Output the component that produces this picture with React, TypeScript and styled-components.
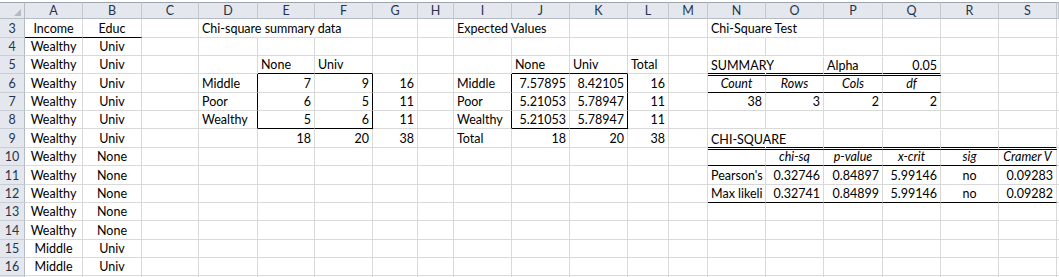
import * as React from 'react';
import styled, { createGlobalStyle, css } from 'styled-components';

type Align = 'l' | 'r' | 'c';
type Line = 'thin' | 'double' | 'none';

interface CellSpec {
  v: string;
  a?: Align;
  i?: boolean;
}

interface EdgeSpec {
  b?: Line;
  r?: Line;
}

// the last column only shows a sliver at the right edge, so it has no letter
const COLS: { k: string; w: number; label?: boolean }[] = [
  { k: 'A', w: 58 },
  { k: 'B', w: 59 },
  { k: 'C', w: 57 },
  { k: 'D', w: 59 },
  { k: 'E', w: 57 },
  { k: 'F', w: 58 },
  { k: 'G', w: 45 },
  { k: 'H', w: 36 },
  { k: 'I', w: 58 },
  { k: 'J', w: 58 },
  { k: 'K', w: 58 },
  { k: 'L', w: 41 },
  { k: 'M', w: 39 },
  { k: 'N', w: 58 },
  { k: 'O', w: 58 },
  { k: 'P', w: 59 },
  { k: 'Q', w: 58 },
  { k: 'R', w: 58 },
  { k: 'S', w: 58 },
  { k: 'T', w: 2, label: false },
];

const ROWS: { n: number; h: number; label?: boolean }[] = [
  { n: 3, h: 19 },
  { n: 4, h: 18 },
  { n: 5, h: 18 },
  { n: 6, h: 19 },
  { n: 7, h: 18 },
  { n: 8, h: 18 },
  { n: 9, h: 19 },
  { n: 10, h: 18 },
  { n: 11, h: 19 },
  { n: 12, h: 18 },
  { n: 13, h: 18 },
  { n: 14, h: 19 },
  { n: 15, h: 18 },
  { n: 16, h: 18 },
  { n: 17, h: 2, label: false },
];

const DATA: Record<string, CellSpec> = {
  A3: { v: 'Income', a: 'c' },
  B3: { v: 'Educ', a: 'c' },
  D3: { v: 'Chi-square summary data' },
  I3: { v: 'Expected Values' },
  N3: { v: 'Chi-Square Test' },

  E5: { v: 'None' },
  F5: { v: 'Univ' },
  J5: { v: 'None' },
  K5: { v: 'Univ' },
  L5: { v: 'Total' },
  N5: { v: 'SUMMARY' },
  P5: { v: 'Alpha' },
  Q5: { v: '0.05', a: 'r' },

  D6: { v: 'Middle' },
  E6: { v: '7', a: 'r' },
  F6: { v: '9', a: 'r' },
  G6: { v: '16', a: 'r' },
  I6: { v: 'Middle' },
  J6: { v: '7.57895', a: 'r' },
  K6: { v: '8.42105', a: 'r' },
  L6: { v: '16', a: 'r' },
  N6: { v: 'Count', a: 'c', i: true },
  O6: { v: 'Rows', a: 'c', i: true },
  P6: { v: 'Cols', a: 'c', i: true },
  Q6: { v: 'df', a: 'c', i: true },

  D7: { v: 'Poor' },
  E7: { v: '6', a: 'r' },
  F7: { v: '5', a: 'r' },
  G7: { v: '11', a: 'r' },
  I7: { v: 'Poor' },
  J7: { v: '5.21053', a: 'r' },
  K7: { v: '5.78947', a: 'r' },
  L7: { v: '11', a: 'r' },
  N7: { v: '38', a: 'r' },
  O7: { v: '3', a: 'r' },
  P7: { v: '2', a: 'r' },
  Q7: { v: '2', a: 'r' },

  D8: { v: 'Wealthy' },
  E8: { v: '5', a: 'r' },
  F8: { v: '6', a: 'r' },
  G8: { v: '11', a: 'r' },
  I8: { v: 'Wealthy' },
  J8: { v: '5.21053', a: 'r' },
  K8: { v: '5.78947', a: 'r' },
  L8: { v: '11', a: 'r' },

  E9: { v: '18', a: 'r' },
  F9: { v: '20', a: 'r' },
  G9: { v: '38', a: 'r' },
  I9: { v: 'Total' },
  J9: { v: '18', a: 'r' },
  K9: { v: '20', a: 'r' },
  L9: { v: '38', a: 'r' },
  N9: { v: 'CHI-SQUARE' },

  O10: { v: 'chi-sq', a: 'c', i: true },
  P10: { v: 'p-value', a: 'c', i: true },
  Q10: { v: 'x-crit', a: 'c', i: true },
  R10: { v: 'sig', a: 'c', i: true },
  S10: { v: 'Cramer V', a: 'c', i: true },

  N11: { v: "Pearson's" },
  O11: { v: '0.32746', a: 'r' },
  P11: { v: '0.84897', a: 'r' },
  Q11: { v: '5.99146', a: 'r' },
  R11: { v: 'no', a: 'c' },
  S11: { v: '0.09283', a: 'r' },

  N12: { v: 'Max likeli' },
  O12: { v: '0.32741', a: 'r' },
  P12: { v: '0.84899', a: 'r' },
  Q12: { v: '5.99146', a: 'r' },
  R12: { v: 'no', a: 'c' },
  S12: { v: '0.09282', a: 'r' },
};

// raw data in columns A and B
for (let n = 4; n <= 16; n++) {
  DATA['A' + n] = { v: n <= 14 ? 'Wealthy' : 'Middle', a: 'c' };
  DATA['B' + n] = { v: n >= 10 && n <= 14 ? 'None' : 'Univ', a: 'c' };
}

const EDGES: Record<string, EdgeSpec> = {};
const edge = (keys: string[], e: EdgeSpec) =>
  keys.forEach((k) => (EDGES[k] = { ...EDGES[k], ...e }));

edge(['A3', 'B3'], { b: 'thin' });
// observed box
edge(['E5', 'F5', 'E8', 'F8'], { b: 'thin' });
edge(['D6', 'D7', 'D8', 'F6', 'F7', 'F8'], { r: 'thin' });
// expected box
edge(['J5', 'K5', 'J8', 'K8'], { b: 'thin' });
edge(['I6', 'I7', 'I8', 'K6', 'K7', 'K8'], { r: 'thin' });
// test tables
edge(['N5', 'O5', 'P5', 'Q5'], { b: 'double' });
edge(['N6', 'O6', 'P6', 'Q6'], { b: 'thin' });
edge(['N9', 'O9', 'P9', 'Q9', 'R9', 'S9'], { b: 'double' });
edge(['N10', 'O10', 'P10', 'Q10', 'R10', 'S10'], { b: 'thin' });
edge(['N12', 'O12', 'P12', 'Q12', 'R12', 'S12'], { b: 'thin' });
// text spilling over the next cell hides the gridline
edge(['D3', 'E3', 'I3', 'N3', 'N5', 'N9'], { r: 'none' });

const GlobalStyle = createGlobalStyle`
  html, body {
    margin: 0;
    padding: 0;
    background: #fff;
    overflow: hidden;
  }
  body {
    font-family: Lato, "Liberation Sans", sans-serif;
  }
`;

const Sheet = styled.div<{ $cols: string; $rows: string }>`
  display: grid;
  grid-template-columns: ${(p) => p.$cols};
  grid-template-rows: ${(p) => p.$rows};
  width: max-content;
  padding-top: 2px;
  font-size: 12.5px;
  color: #000;
`;

const headerBg = '#e4e8ee';

const Corner = styled.div`
  position: relative;
  background: ${headerBg};
  border-top: 1px solid #9ca4ae;
  border-right: 1px solid #b6bcc5;
  border-bottom: 1px solid #b6bcc5;

  &::after {
    content: '';
    position: absolute;
    right: 3px;
    bottom: 2px;
    width: 0;
    height: 0;
    border-left: 7px solid transparent;
    border-bottom: 7px solid #b4bac2;
  }
`;

const ColHeader = styled.div`
  display: flex;
  align-items: center;
  justify-content: center;
  overflow: hidden;
  background: ${headerBg};
  border-top: 1px solid #9ca4ae;
  border-right: 1px solid #c3c8cf;
  border-bottom: 1px solid #b6bcc5;
  color: #26344a;
  font-size: 12.5px;
  line-height: 14px;
`;

const RowHeader = styled.div`
  display: flex;
  align-items: flex-end;
  justify-content: center;
  overflow: hidden;
  padding-bottom: 1px;
  background: ${headerBg};
  border-right: 1px solid #b6bcc5;
  border-bottom: 1px solid #c9ced6;
  color: #26344a;
  font-size: 12.5px;
  line-height: 14px;
`;

const lineCss = (l: Line | undefined) => {
  if (l === 'thin') return '1px solid #000';
  if (l === 'double') return '3px double #000';
  if (l === 'none') return '1px solid transparent';
  return '1px solid #d9d9d9';
};

const Cell = styled.div<{ $align: Align; $italic: boolean; $b?: Line; $r?: Line }>`
  display: flex;
  align-items: flex-end;
  justify-content: ${(p) =>
    p.$align === 'r' ? 'flex-end' : p.$align === 'c' ? 'center' : 'flex-start'};
  padding: 0 3px ${(p) => (p.$b === 'double' ? 0 : 1)}px 3px;
  border-right: ${(p) => lineCss(p.$r)};
  border-bottom: ${(p) => lineCss(p.$b)};
  ${(p) =>
    p.$b === 'double' &&
    css`
      margin-bottom: -1px;
      position: relative;
      top: 1px;
    `}
  min-width: 0;
  white-space: nowrap;
  line-height: 14px;
  font-style: ${(p) => (p.$italic ? 'italic' : 'normal')};
  overflow: visible;
`;

export default function App() {
  const colsTemplate = ['25px', ...COLS.map((c) => c.w + 'px')].join(' ');
  const rowsTemplate = ['17px', ...ROWS.map((r) => r.h + 'px')].join(' ');

  return (
    <>
      <GlobalStyle />
      <Sheet $cols={colsTemplate} $rows={rowsTemplate}>
        <Corner />
        {COLS.map((c) => (
          <ColHeader key={c.k}>{c.label === false ? null : c.k}</ColHeader>
        ))}
        {ROWS.map((r) => (
          <React.Fragment key={r.n}>
            <RowHeader>{r.label === false ? null : r.n}</RowHeader>
            {COLS.map((c) => {
              const id = c.k + r.n;
              const d = DATA[id];
              const e = EDGES[id] || {};
              return (
                <Cell
                  key={id}
                  $align={d?.a || 'l'}
                  $italic={!!d?.i}
                  $b={e.b}
                  $r={e.r}
                >
                  {d?.v}
                </Cell>
              );
            })}
          </React.Fragment>
        ))}
      </Sheet>
    </>
  );
}
